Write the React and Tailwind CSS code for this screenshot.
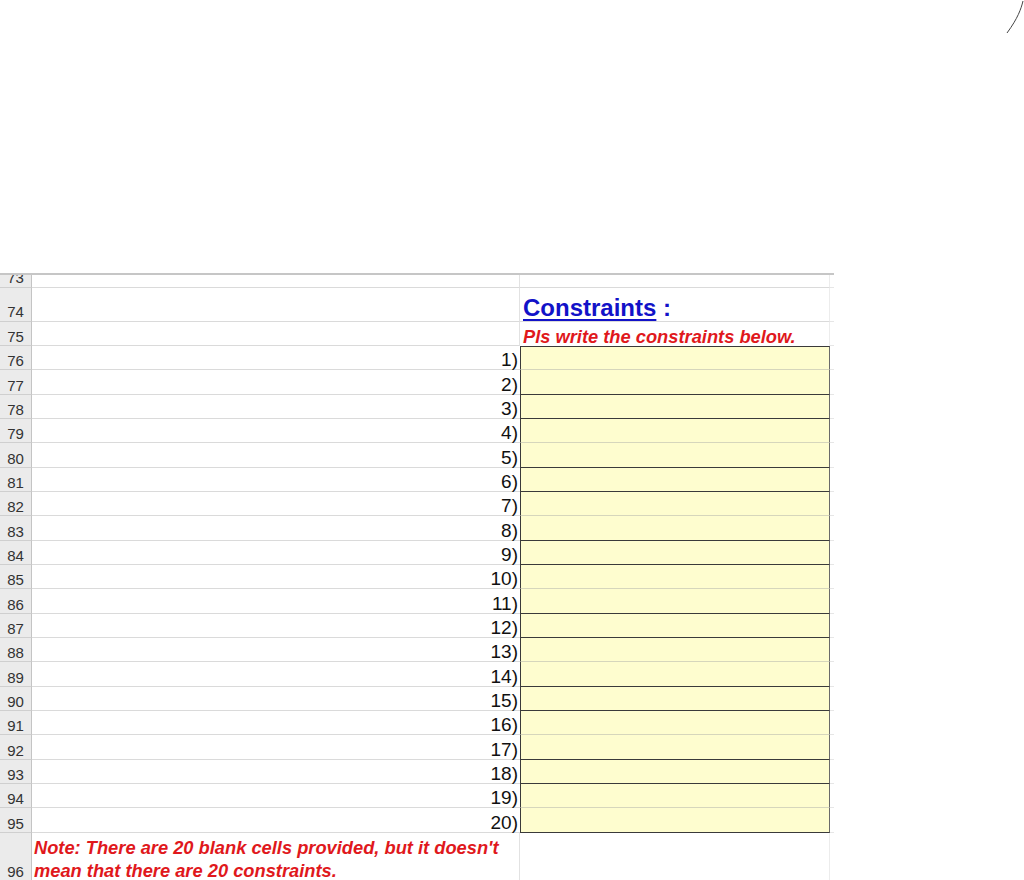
import React from "react";

const FONT = { fontFamily: '"Liberation Sans", Arial, sans-serif' };

// heights of rows 76..95
const slotHeights = [
  "h-[24px]", "h-[25px]", "h-[24px]", "h-[24px]", "h-[25px]",
  "h-[24px]", "h-[24px]", "h-[25px]", "h-[24px]", "h-[24px]",
  "h-[25px]", "h-[24px]", "h-[24px]", "h-[25px]", "h-[24px]",
  "h-[24px]", "h-[25px]", "h-[24px]", "h-[24px]", "h-[25px]",
];

function RowHead({ n, className = "" }) {
  return (
    <div
      className={
        "w-[32px] shrink-0 bg-[#ebebeb] border-r border-r-[#c4c4c4] border-b border-b-[#cfcfcf] flex items-end justify-center text-[15px] leading-[17px] text-[#333] " +
        className
      }
    >
      {n}
    </div>
  );
}

function Tail() {
  return <div className="w-[4px] shrink-0 border-b border-b-[#e6e6e6]" />;
}

function SlotRow({ i, h }) {
  const n = i + 1;
  // every third boundary inside the box is a light rule, the rest are dark
  const lightBottom = i < 19 && i % 3 === 0;
  const bottom = lightBottom ? "border-b-[#d6d6bc]" : "border-b-[#3a3a3a]";
  return (
    <div className={"flex " + h}>
      <RowHead n={75 + n} className="pb-0" />
      <div className="w-[488px] shrink-0 border-b border-b-[#dadada] flex items-end justify-end pr-[2px] text-[19px] leading-[19px] text-[#111]">
        {n})
      </div>
      <div
        className={
          "w-[310px] shrink-0 bg-[#fefdcf] border-l border-l-[#3a3a3a] border-r border-r-[#6a6a6a] border-b " +
          bottom +
          (i === 0 ? " border-t border-t-[#3a3a3a]" : "")
        }
      />
      <Tail />
    </div>
  );
}

export default function App() {
  return (
    <div className="relative w-[1024px] h-[880px] bg-white overflow-hidden" style={FONT}>
      <svg
        className="absolute right-0 top-0"
        width="24"
        height="40"
        viewBox="0 0 24 40"
        fill="none"
      >
        <path d="M23 1 C21 9 18 18 7 33" stroke="#444" strokeWidth="1" />
      </svg>

      <div className="h-[273px]" />

      <div className="w-[834px] border-t-2 border-t-[#c6c6c6]">
        {/* row 73, cut by the frozen edge */}
        <div className="flex h-[13px] overflow-hidden">
          <div className="w-[32px] shrink-0 bg-[#ebebeb] border-r border-r-[#c4c4c4] border-b border-b-[#cfcfcf] flex items-end justify-center text-[15px] leading-[17px] text-[#333] pb-[1px]">
            73
          </div>
          <div className="w-[488px] shrink-0 border-b border-b-[#dadada] border-r border-r-[#e2e2e2]" />
          <div className="w-[310px] shrink-0 border-b border-b-[#dadada] border-r border-r-[#ececec]" />
          <Tail />
        </div>

        {/* row 74 */}
        <div className="flex h-[34px]">
          <RowHead n={74} className="pb-[1px]" />
          <div className="w-[488px] shrink-0 border-b border-b-[#dadada] border-r border-r-[#e2e2e2]" />
          <div className="w-[310px] shrink-0 border-b border-b-[#dadada] border-r border-r-[#ececec] flex items-end pl-[3px] pb-0">
            <span className="text-[24px] leading-[26px] font-bold text-[#1212c8]">
              <span className="underline decoration-2 underline-offset-[3px]">Constraints</span> :
            </span>
          </div>
          <Tail />
        </div>

        {/* row 75 */}
        <div className="flex h-[24px]">
          <RowHead n={75} className="pb-0" />
          <div className="w-[488px] shrink-0 border-b border-b-[#dadada] border-r border-r-[#e2e2e2]" />
          <div className="w-[310px] shrink-0 border-r border-r-[#ececec] flex items-end pl-[3px] pb-0">
            <span className="text-[18.3px] leading-[18px] font-bold italic text-[#e0181c] whitespace-nowrap">
              Pls write the constraints below.
            </span>
          </div>
          <Tail />
        </div>

        {slotHeights.map((h, i) => (
          <SlotRow key={i} i={i} h={h} />
        ))}

        {/* row 96 */}
        <div className="flex h-[50px]">
          <RowHead n={96} className="pb-[2px]" />
          <div className="w-[488px] shrink-0 border-r border-r-[#e2e2e2] pl-[2px] pt-[3px]">
            <p className="text-[18.3px] leading-[23px] font-bold italic text-[#e0181c]">
              Note: There are 20 blank cells provided, but it doesn't mean that there are 20 constraints.
            </p>
          </div>
          <div className="w-[310px] shrink-0 border-r border-r-[#ececec]" />
          <Tail />
        </div>
      </div>
    </div>
  );
}
